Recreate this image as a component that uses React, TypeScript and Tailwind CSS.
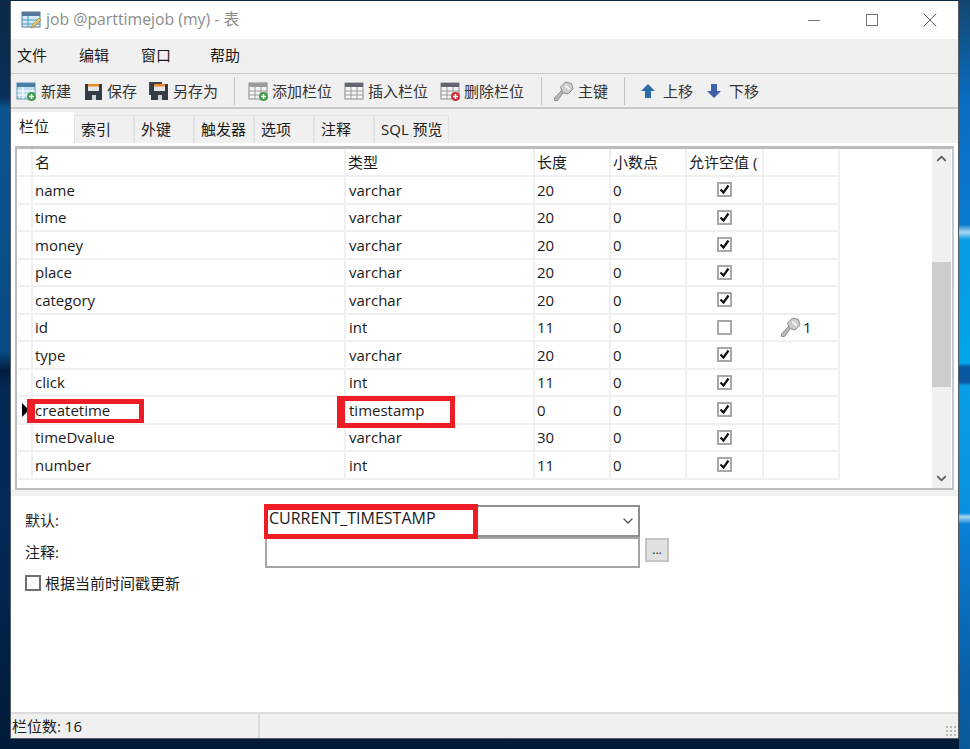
import { ChevronDown, ChevronUp, X } from 'lucide-react'

const rows = [
  ['name', 'varchar', '20', true],
  ['time', 'varchar', '20', true],
  ['money', 'varchar', '20', true],
  ['place', 'varchar', '20', true],
  ['category', 'varchar', '20', true],
  ['id', 'int', '11', false],
  ['type', 'varchar', '20', true],
  ['click', 'int', '11', true],
  ['createtime', 'timestamp', '0', true],
  ['timeDvalue', 'varchar', '30', true],
  ['number', 'int', '11', true],
] as const

const tabs = ['索引', '外键', '触发器', '选项', '注释', 'SQL 预览']

function TableIcon({ badge, faded }: { badge?: string; faded?: boolean }) {
  return (
    <svg width="21" height="21" viewBox="0 0 21 21" className="shrink-0">
      <rect x="1" y="2" width="18" height="16" fill="#f4f4f4" stroke="#8a8a8a" />
      <rect x="1" y="2" width="18" height="4" fill={faded ? '#9a9a9a' : '#5f6670'} />
      <path d="M1 10h18M1 14h18M7 6v12M13 6v12" stroke="#9a9a9a" />
      {badge && <circle cx="15.5" cy="15.5" r="4.5" fill={badge} />}
      {badge && <path d="M13 15.5h5M15.5 13v5" stroke="#fff" strokeWidth="1.5" />}
    </svg>
  )
}

function NewIcon() {
  return (
    <svg width="21" height="21" viewBox="0 0 21 21" className="shrink-0 mr-px">
      <rect x="1" y="2" width="18" height="16" fill="#bfe0f2" stroke="#5d8fae" />
      <rect x="1" y="2" width="18" height="4" fill="#4a7fa5" />
      <path d="M7 6v12M1 10h18M1 14h18" stroke="#ffffff" />
      <circle cx="15.5" cy="15.5" r="4.5" fill="#3f9a4a" />
      <path d="M13 15.5h5M15.5 13v5" stroke="#fff" strokeWidth="1.5" />
    </svg>
  )
}

function SaveIcon({ offset }: { offset?: boolean }) {
  return (
    <svg width="20" height="20" viewBox="0 0 20 20" className="shrink-0 mr-px">
      {offset && <path d="M0 1h13v3H3v10H0z" fill="#3d4650" />}
      <path d="M2 3h17v16H2z" fill="#333b44" />
      <rect x="5" y="3" width="11" height="7" fill="#e4e6e8" />
      <rect x="5" y="3" width="11" height="2.5" fill="#e88a2c" />
      <rect x="9" y="14" width="4" height="5" fill="#cfd3d6" />
    </svg>
  )
}

function KeyIcon({ size = 21 }: { size?: number }) {
  return (
    <svg width={size} height={size} viewBox="0 0 21 21" className="shrink-0 mr-px">
      <path d="M1.500 17l7-7.500 1.500 2.500L4.500 19.500h-3z" fill="#b4b8b8" stroke="#8d9191" />
      <path d="M7.500 6l5-5 6 1.500 1.500 5.500-5 5-5.500-1.500z" fill="#c9cdcd" stroke="#8d9191" />
      <path d="M12.500 4.500l4 4" stroke="#f4f4f4" strokeWidth="2" />
    </svg>
  )
}

function ArrowIcon({ down }: { down?: boolean }) {
  return (
    <svg width="16" height="16" viewBox="0 0 16 16" className="shrink-0 mr-[4px]">
      <path
        d={down ? 'M5 1h6v7h4l-7 7-7-7h4z' : 'M8 1l7 7h-4v7H5V8H1z'}
        fill={down ? '#3f62a8' : '#2f6da8'}
      />
    </svg>
  )
}

function Check({ on }: { on: boolean }) {
  return (
    <div className="w-[15px] h-[15px] border-2 border-[#a8a8a8] bg-white flex items-center justify-center">
      {on && (
        <svg width="11" height="11" viewBox="0 0 11 11">
          <path d="M1.500 5.500l3 3 5-7" fill="none" stroke="#111" strokeWidth="2.2" />
        </svg>
      )}
    </div>
  )
}

function ToolButton({ icon, label, className }: { icon: React.ReactNode; label: string; className?: string }) {
  return (
    <div className={`flex items-center gap-[3px] ${className ?? ''}`}>
      {icon}
      <span>{label}</span>
    </div>
  )
}

const cell = 'flex items-center border-r-2 border-[#f0f0f0]'

export default function App() {
  return (
    <div
      className="w-[970px] h-[749px] overflow-hidden pt-px pb-[10px] pl-[10px] pr-[11px] bg-[linear-gradient(180deg,#0c2a46_0%,#08305a_13%,#0a5590_14.5%,#064a86_47%,#021d3e_49.5%,#032a55_52%,#032a58_70%,#021a38_100%)] relative"
      style={{ fontFamily: '"Open Sans", "Noto Sans CJK SC", sans-serif' }}
    >
      <div className="absolute right-0 top-0 bottom-0 w-[11px] bg-[linear-gradient(180deg,#14466e_0%,#0a6cc0_13%,#0a7cd0_30%,#a8d8f0_31%,#0a9ce6_32%,#00a5ea_48.500%,#0a58a0_49%,#0a58a0_51%,#0a9fe8_51.500%,#0a90e0_68.500%,#a8d8f0_69%,#0a80d8_70%,#0a60a8_90%,#0a5a9a_100%)]" />

      <div className="relative h-full flex flex-col bg-white text-[15px] text-[#1b1b1b] border border-[#555b62] border-t-0">
        {/* title bar */}
        <div className="h-[38px] shrink-0 flex items-center pl-[10px] bg-white text-[#8c8c8c] text-[15.8px]">
          <svg width="20" height="20" viewBox="0 0 20 20" className="mr-[5px]">
            <rect x="1" y="2" width="18" height="15" fill="#d8eaf5" stroke="#5d7f98" />
            <rect x="1" y="2" width="18" height="4" fill="#56789a" />
            <path d="M7 6v11M1 10h18M1 14h18" stroke="#3d9ccc" />
            <path d="M10 18l2-4 6-6 2 2-6 6z" fill="#e9c36a" stroke="#9a7a38" strokeWidth=".6" />
          </svg>
          <span>job @parttimejob (my) - 表</span>
          <div className="ml-auto flex items-center mr-[-1px]">
            <div className="w-[58px] flex justify-center">
              <div className="w-[12px] h-px bg-[#777]" />
            </div>
            <div className="w-[58px] flex justify-center">
              <div className="w-[12px] h-[12px] border border-[#777]" />
            </div>
            <div className="w-[58px] flex justify-center">
              <X size={24} strokeWidth={1} className="text-[#666]" />
            </div>
          </div>
        </div>

        {/* menu */}
        <div className="h-[35px] shrink-0 flex items-center bg-[#f0f0f0] border-b border-[#c9c9c9] pl-[6px] pb-[2px]">
          <span className="w-[62px]">文件</span>
          <span className="w-[62px]">编辑</span>
          <span className="w-[69px]">窗口</span>
          <span>帮助</span>
        </div>

        {/* toolbar */}
        <div className="h-[35px] shrink-0 flex items-center bg-[#f0f0f0] border-b-2 border-[#c9c9c9] pl-[5px] pt-px text-[#333]">
          <ToolButton icon={<NewIcon />} label="新建" className="w-[67px]" />
          <ToolButton icon={<SaveIcon />} label="保存" className="w-[66px]" />
          <ToolButton icon={<SaveIcon offset />} label="另存为" className="w-[85px]" />
          <div className="w-px h-[28px] bg-[#c4c4c4] mr-[13px]" />
          <ToolButton icon={<TableIcon badge="#3f9a4a" faded />} label="添加栏位" className="w-[96px]" />
          <ToolButton icon={<TableIcon />} label="插入栏位" className="w-[96px]" />
          <ToolButton icon={<TableIcon badge="#c8323a" />} label="删除栏位" className="w-[101px]" />
          <div className="w-px h-[28px] bg-[#c4c4c4] mr-[11px]" />
          <ToolButton icon={<KeyIcon />} label="主键" className="w-[71px]" />
          <div className="w-px h-[28px] bg-[#c4c4c4] mr-[15px]" />
          <ToolButton icon={<ArrowIcon />} label="上移" className="w-[66px]" />
          <ToolButton icon={<ArrowIcon down />} label="下移" />
        </div>

        {/* tabs */}
        <div className="h-[34px] shrink-0 flex items-end bg-[#f0f0f0]">
          <div className="w-[63px] h-[31px] bg-white pl-[8px] flex items-center pb-[3px]">栏位</div>
          {tabs.map((t) => (
            <div
              key={t}
              className="h-[28px] pl-[6px] w-[60px] last:w-[75px] flex items-center bg-[#f0f0f0] border-l border-r border-t border-[#e2e2e2] whitespace-nowrap"
            >
              {t}
            </div>
          ))}
        </div>

        {/* grid */}
        <div className="flex-1 flex flex-col bg-white px-[4px] pt-[3px]">
          <div className="h-[344px] shrink-0 border-2 border-t-[3px] border-[#b8bcbf] border-r-[#c4c8ca] flex relative pl-px">
            <div className="w-[822px] shrink-0">
              <div className="flex h-[28px] border-b-2 border-[#f0f0f0]">
                <div className={`${cell} w-[15px]`} />
                <div className={`${cell} w-[313px] pl-[2px]`}>名</div>
                <div className={`${cell} w-[189px] pl-[2px]`}>类型</div>
                <div className={`${cell} w-[76px] pl-[2px]`}>长度</div>
                <div className={`${cell} w-[76px] pl-[2px]`}>小数点</div>
                <div className={`${cell} w-[77px] pl-[2px] overflow-hidden whitespace-nowrap`}>允许空值 (</div>
                <div className={`${cell} w-[76px]`} />
              </div>
              {rows.map(([name, type, len, nullable], i) => (
                <div key={name} className="flex h-[27.5px] border-b-2 border-[#f0f0f0]">
                  <div className={`${cell} w-[15px] pl-[4px]`}>
                    {i === 8 && <div className="w-0 h-0 border-y-[7px] border-y-transparent border-l-[7px] border-l-black" />}
                  </div>
                  <div className={`${cell} w-[313px] pl-[2px]`}>{name}</div>
                  <div className={`${cell} w-[189px] pl-[3px]`}>{type}</div>
                  <div className={`${cell} w-[76px] pl-[2px]`}>{len}</div>
                  <div className={`${cell} w-[76px] pl-[2px]`}>0</div>
                  <div className={`${cell} w-[77px] justify-center`}>
                    <Check on={nullable} />
                  </div>
                  <div className={`${cell} w-[76px] pl-[16px] gap-px`}>
                    {!nullable && (
                      <>
                        <KeyIcon />
                        <span>1</span>
                      </>
                    )}
                  </div>
                </div>
              ))}
            </div>

            {/* scrollbar */}
            <div className="absolute right-[1px] top-0 bottom-0 w-[19px] bg-[#f0f0f0] flex flex-col justify-between items-center py-[2px]">
              <ChevronUp size={15} strokeWidth={3} className="text-[#606060]" />
              <ChevronDown size={15} strokeWidth={3} className="text-[#606060]" />
              <div className="absolute left-0 right-0 top-[113px] h-[125px] bg-[#cdcdcd]" />
            </div>
          </div>
          <div className="h-[6px] shrink-0 bg-[#f0f0f0] -mx-[4px]" />

          {/* details */}
          <div className="flex-1 relative flex flex-col">
            <div className="flex items-center h-[33px] mt-[8px] pl-[10px]">
              <span className="w-[240px]">默认:</span>
              <div className="w-[375px] h-[32px] border-2 border-[#8f8f8f] flex items-center justify-between pl-[2px] pr-[2px]">
                <span className="text-[16px] mb-[5px]">CURRENT_TIMESTAMP</span>
                <ChevronDown size={16} strokeWidth={2} className="text-[#555]" />
              </div>
            </div>
            <div className="flex items-center h-[31px] pl-[10px]">
              <span className="w-[240px]">注释:</span>
              <div className="w-[375px] h-[31px] border-2 border-[#a5a5a5]" />
              <div className="ml-[5px] w-[24px] h-[24px] self-start mt-px bg-[#e1e1e1] border-2 border-[#c4c4c4] flex items-center justify-center text-[12px] leading-none">...</div>
            </div>
            <label className="flex items-center gap-[4px] mt-[4px] ml-[10px]">
              <span className="w-[16px] h-[16px] border-2 border-[#6f6f6f]" />
              <span>根据当前时间戳更新</span>
            </label>
          </div>
        </div>

        {/* status bar */}
        <div className="h-[26px] shrink-0 flex items-center bg-[#f0f0f0] border-t-2 border-[#dcdcdc] relative">
          <span className="w-[249px] pl-[1px] border-r-2 border-[#dcdcdc] h-full flex items-center">栏位数: 16</span>
          <div className="absolute right-[2px] bottom-[2px] w-[11px] h-[11px] bg-[radial-gradient(#b8b8b8_1px,transparent_1.5px)] bg-[length:4px_4px]" />
        </div>

        {/* red annotation boxes */}
        <div className="absolute left-[16px] top-[398px] w-[117px] h-[24px] border-[5px] border-l-[8px] border-b-[4px] border-[#ee1c25]" />
        <div className="absolute left-[326px] top-[395px] w-[118px] h-[32px] border-[5px] border-l-[8px] border-[#ee1c25]" />
        <div className="absolute left-[253px] top-[503px] w-[214px] h-[35px] border-[5px] border-l-[4px] border-t-[6px] border-[#ee1c25]" />
      </div>
    </div>
  )
}
